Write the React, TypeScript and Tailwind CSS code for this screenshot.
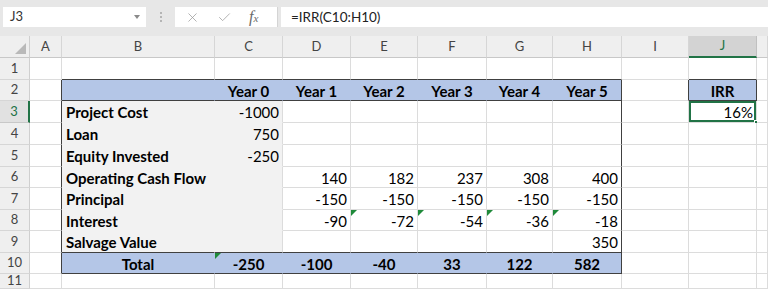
import React from "react";
import { X, Check } from "lucide-react";

const COLS = ["A", "B", "C", "D", "E", "F", "G", "H", "I", "J", ""];
const WIDTHS = [32, 153, 68, 68, 67, 69, 66, 69, 67, 68, 11];
const HEIGHTS = [22, 21, 22, 22, 22, 21, 22, 21, 22, 21, 15];

type Fill = "white" | "blue" | "gray";
type Edge = "dark" | "grid" | "blue" | "gray";

const BG: Record<Fill, string> = {
  white: "bg-white",
  blue: "bg-[#b4c6e7]",
  gray: "bg-[#f2f2f2]",
};
const BR: Record<Edge, string> = {
  dark: "border-r-[#404040]",
  grid: "border-r-[#dcdcdc]",
  blue: "border-r-[#b4c6e7]",
  gray: "border-r-[#f2f2f2]",
};
const BB: Record<Edge, string> = {
  dark: "border-b-[#404040]",
  grid: "border-b-[#dcdcdc]",
  blue: "border-b-[#b4c6e7]",
  gray: "border-b-[#f2f2f2]",
};

type CellData = { t: string; align?: "l" | "r" | "c"; bold?: boolean; tri?: boolean };

const data: Record<number, Record<number, CellData>> = {
  2: {
    2: { t: "Year 0", align: "c", bold: true },
    3: { t: "Year 1", align: "c", bold: true },
    4: { t: "Year 2", align: "c", bold: true },
    5: { t: "Year 3", align: "c", bold: true },
    6: { t: "Year 4", align: "c", bold: true },
    7: { t: "Year 5", align: "c", bold: true },
    9: { t: "IRR", align: "c", bold: true },
  },
  3: { 1: { t: "Project Cost", bold: true }, 2: { t: "-1000", align: "r" }, 9: { t: "16%", align: "r" } },
  4: { 1: { t: "Loan", bold: true }, 2: { t: "750", align: "r" } },
  5: { 1: { t: "Equity Invested", bold: true }, 2: { t: "-250", align: "r" } },
  6: {
    1: { t: "Operating Cash Flow", bold: true },
    3: { t: "140", align: "r" },
    4: { t: "182", align: "r" },
    5: { t: "237", align: "r" },
    6: { t: "308", align: "r" },
    7: { t: "400", align: "r" },
  },
  7: {
    1: { t: "Principal", bold: true },
    3: { t: "-150", align: "r" },
    4: { t: "-150", align: "r" },
    5: { t: "-150", align: "r" },
    6: { t: "-150", align: "r" },
    7: { t: "-150", align: "r" },
  },
  8: {
    1: { t: "Interest", bold: true },
    3: { t: "-90", align: "r" },
    4: { t: "-72", align: "r", tri: true },
    5: { t: "-54", align: "r", tri: true },
    6: { t: "-36", align: "r", tri: true },
    7: { t: "-18", align: "r", tri: true },
  },
  9: { 1: { t: "Salvage Value", bold: true }, 7: { t: "350", align: "r" } },
  10: {
    1: { t: "Total", align: "c", bold: true },
    2: { t: "-250", align: "c", bold: true, tri: true },
    3: { t: "-100", align: "c", bold: true },
    4: { t: "-40", align: "c", bold: true },
    5: { t: "33", align: "c", bold: true },
    6: { t: "122", align: "c", bold: true },
    7: { t: "582", align: "c", bold: true },
  },
};

function fillOf(r: number, c: number): Fill {
  if ((r === 2 || r === 10) && c >= 1 && c <= 7) return "blue";
  if (r === 2 && c === 9) return "blue";
  if (r >= 3 && r <= 9 && c >= 1 && c <= 2) return "gray";
  return "white";
}

function rightOf(r: number, c: number): Edge {
  if (r >= 2 && r <= 10 && (c === 0 || c === 7)) return "dark";
  if (r === 2 && (c === 8 || c === 9)) return "dark";
  const f = fillOf(r, c);
  if (f === "blue" && c < 7) return "blue";
  if (f === "gray" && c === 1) return "gray";
  return "grid";
}

function bottomOf(r: number, c: number): Edge {
  if ((r === 1 || r === 2 || r === 9 || r === 10) && c >= 1 && c <= 7) return "dark";
  if ((r === 1 || r === 2) && c === 9) return "dark";
  const f = fillOf(r, c);
  if (f === "gray" && r < 9) return "gray";
  return "grid";
}

const FONT = { fontFamily: "Lato, 'Open Sans', 'Liberation Sans', sans-serif" };

function Row({ r }: { r: number }) {
  const h = HEIGHTS[r - 1];
  const sel = r === 3;
  return (
    <div className="flex" style={{ height: h }}>
      <div
        className={`w-[30px] shrink-0 flex items-center justify-center text-[13px] border-b ${
          sel
            ? "bg-[#e1e1e1] text-[#217346] border-r-2 border-r-[#217346] border-b-[#c8c8c8]"
            : "bg-[#efefef] text-[#444] border-r border-r-[#cfcfcf] border-b-[#d6d6d6]"
        }`}
      >
        {r}
      </div>
      {WIDTHS.map((w, c) => {
        const d = data[r]?.[c];
        const f = fillOf(r, c);
        const isSel = r === 3 && c === 9;
        const al =
          d?.align === "r" ? "justify-end pr-[3px]" : d?.align === "c" ? "justify-center" : "justify-start pl-[4px]";
        return (
          <div
            key={c}
            style={{ width: w }}
            className={`relative shrink-0 flex items-center pt-[2px] border-r border-b text-[15px] text-black ${BG[f]} ${BR[rightOf(r, c)]} ${BB[bottomOf(r, c)]} ${al} ${
              d?.bold ? "font-bold" : "font-normal"
            } ${isSel ? "shadow-[inset_0_0_0_2px_#217346]" : ""}`}
          >
            {d?.tri && (
              <span className="absolute left-0 top-0 w-0 h-0 border-t-[6px] border-t-[#1f8a3a] border-r-[6px] border-r-transparent" />
            )}
            <span className="leading-none whitespace-nowrap">{d?.t}</span>
            {isSel && (
              <span className="absolute -right-[3px] -bottom-[3px] w-[5px] h-[5px] bg-[#217346] border border-white" />
            )}
          </div>
        );
      })}
    </div>
  );
}

export default function App() {
  return (
    <div className="w-[768px] h-[289px] overflow-hidden bg-white select-none" style={FONT}>
      {/* formula bar */}
      <div className="h-[36px] bg-[#e7e7e7] flex items-start pt-[7px]">
        <div className="ml-[3px] w-[143px] h-[20px] bg-white flex items-center justify-between pl-[7px] pr-[6px] text-[13px] text-[#333]">
          <span>J3</span>
          <span className="w-0 h-0 border-l-[3px] border-r-[3px] border-t-[4px] border-l-transparent border-r-transparent border-t-[#8a8a8a]" />
        </div>
        <div className="w-[29px] h-[20px] flex flex-col items-center justify-center gap-[2px]">
          <span className="w-[2px] h-[2px] bg-[#b5b5b5]" />
          <span className="w-[2px] h-[2px] bg-[#b5b5b5]" />
          <span className="w-[2px] h-[2px] bg-[#b5b5b5]" />
        </div>
        <div className="w-[103px] h-[20px] bg-white flex items-center pl-[10px] gap-[17px] border-r border-r-[#d4d4d4]">
          <X size={15} strokeWidth={1.2} color="#9a9a9a" />
          <Check size={15} strokeWidth={1.2} color="#9a9a9a" />
          <span className="text-[16px] italic text-[#6a6a6a]" style={{ fontFamily: "'Liberation Serif', serif" }}>
            f<span className="text-[11px]">x</span>
          </span>
        </div>
        <div className="flex-1 h-[20px] bg-white ml-[3px] flex items-center pl-[10px] text-[13.5px] text-[#222]">
          =IRR(C10:H10)
        </div>
      </div>
      {/* column headers */}
      <div className="flex h-[22px]">
        <div className="relative w-[30px] shrink-0 bg-[#efefef] border-r border-b border-r-[#cfcfcf] border-b-[#c8c8c8]">
          <span className="absolute right-[3px] bottom-[3px] w-0 h-0 border-b-[11px] border-b-[#b9b9b9] border-l-[11px] border-l-transparent" />
        </div>
        {WIDTHS.map((w, c) => {
          const sel = c === 9;
          return (
            <div
              key={c}
              style={{ width: w }}
              className={`shrink-0 flex items-center justify-center text-[13px] border-r ${
                sel
                  ? "bg-[#d3d3d3] text-[#217346] border-b-2 border-b-[#217346] border-r-[#c0c0c0]"
                  : "bg-[#efefef] text-[#444] border-b border-b-[#c8c8c8] border-r-[#d6d6d6]"
              }`}
            >
              {COLS[c]}
            </div>
          );
        })}
      </div>
      {Array.from({ length: 11 }, (_, i) => (
        <Row key={i} r={i + 1} />
      ))}
    </div>
  );
}
